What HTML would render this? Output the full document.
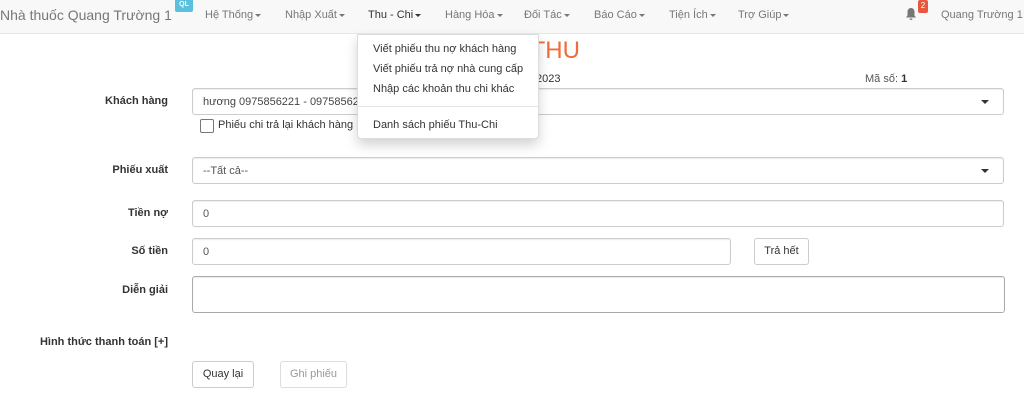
<!DOCTYPE html>
<html><head><meta charset="utf-8"><style>
*{box-sizing:border-box;margin:0;padding:0}
body{width:1024px;height:413px;overflow:hidden;background:#fff;font-family:"Liberation Sans",Arial,sans-serif;font-size:11px;color:#333;position:relative}
.a{position:absolute;white-space:nowrap}
.nav{position:absolute;left:0;top:0;width:1024px;height:34px;background:#f8f8f8;border-bottom:1px solid #e7e7e7}
.m{position:absolute;top:9px;font-size:11px;color:#777;white-space:nowrap}
.c{display:inline-block;width:0;height:0;border-left:3px solid transparent;border-right:3px solid transparent;border-top:3px solid #777;vertical-align:middle;margin-left:2px}
.lbl{position:absolute;font-weight:bold;font-size:11px;color:#333;text-align:right;width:168px;left:0;white-space:nowrap}
.in{position:absolute;border:1px solid #ccc;border-radius:3px;background:#fff;box-shadow:inset 0 1px 1px rgba(0,0,0,.075);padding:7px 10px;font-size:11px;color:#555;white-space:nowrap}
.btn{position:absolute;border:1px solid #ccc;border-radius:3px;background:#fff;font-size:11px;color:#333;text-align:center;line-height:25px}
.arr{position:absolute;right:14px;top:11px;border-left:4px solid transparent;border-right:4px solid transparent;border-top:4px solid #333}
</style></head><body>
<div class="nav">
<div class="a" style="left:0;top:7px;font-size:14px;color:#777">Nhà thuốc Quang Trường 1</div>
<div class="a" style="left:175px;top:0;width:18px;height:12px;background:#5bc0de;color:#fff;font-size:7px;font-weight:bold;text-align:center;line-height:10px;border-radius:0 0 2px 2px">QL</div>
<div class="m" style="left:205px">Hệ Thống<span class="c"></span></div>
<div class="m" style="left:285px">Nhập Xuất<span class="c"></span></div>
<div class="m" style="left:368px;color:#333">Thu - Chi<span class="c" style="border-top-color:#333"></span></div>
<div class="m" style="left:445px">Hàng Hóa<span class="c"></span></div>
<div class="m" style="left:524px">Đối Tác<span class="c"></span></div>
<div class="m" style="left:594px">Báo Cáo<span class="c"></span></div>
<div class="m" style="left:669px">Tiện Ích<span class="c"></span></div>
<div class="m" style="left:738px">Trợ Giúp<span class="c"></span></div>
<svg class="a" style="left:904px;top:7px" width="14" height="14" viewBox="0 0 14 14"><path d="M7 1C4.5 1 3.5 3 3.5 5v3.5L2 10.5h10L10.5 8.5V5C10.5 3 9.5 1 7 1z M5.5 11.5a1.5 1.5 0 0 0 3 0z" fill="#777"/></svg>
<div class="a" style="left:918px;top:0;width:10px;height:13px;background:#e9573f;color:#fff;font-size:8px;text-align:center;line-height:12px;border-radius:2px">2</div>
<div class="m" style="left:941px">Quang Trường 1</div>
</div>
<div class="a" style="left:451px;top:37px;font-size:24px;color:#f26b3a">PHIẾU THU</div>
<div class="a" style="left:536px;top:73px;font-size:11px;color:#333">2023</div>
<div class="a" style="left:865px;top:73px;font-size:11px;color:#555">Mã số: <b style="color:#333">1</b></div>

<div class="lbl" style="top:95px">Khách hàng</div>
<div class="in" style="left:192px;top:88px;width:812px;height:27px;color:#444">hương 0975856221 - 0975856221<span class="arr"></span></div>
<div class="a" style="left:200px;top:119px;width:14px;height:14px;border:1px solid #777;border-radius:2px;background:#fff"></div>
<div class="a" style="left:218px;top:119px;font-size:11px;color:#333">Phiếu chi trả lại khách hàng</div>

<div class="lbl" style="top:164px">Phiếu xuất</div>
<div class="in" style="left:192px;top:157px;width:812px;height:27px">--Tất cả--<span class="arr"></span></div>
<div class="lbl" style="top:207px">Tiền nợ</div>
<div class="in" style="left:192px;top:200px;width:812px;height:27px">0</div>
<div class="lbl" style="top:245px">Số tiền</div>
<div class="in" style="left:192px;top:238px;width:539px;height:27px">0</div>
<div class="btn" style="left:754px;top:238px;width:55px;height:27px">Trả hết</div>
<div class="lbl" style="top:284px">Diễn giải</div>
<div class="in" style="left:192px;top:276px;width:813px;height:37px;border-color:#aaa"></div>
<div class="lbl" style="top:336px">Hình thức thanh toán [+]</div>
<div class="btn" style="left:192px;top:361px;width:62px;height:27px">Quay lại</div>
<div class="btn" style="left:280px;top:361px;width:67px;height:27px;color:#999;border-color:#ddd">Ghi phiếu</div>

<div class="a" style="left:357px;top:34px;width:182px;height:105px;background:#fff;border:1px solid #ddd;border-radius:0 0 4px 4px;box-shadow:0 6px 12px rgba(0,0,0,.175)">
<div class="a" style="left:15px;top:8px;font-size:11px;color:#333">Viết phiếu thu nợ khách hàng</div>
<div class="a" style="left:15px;top:28px;font-size:11px;color:#333">Viết phiếu trả nợ nhà cung cấp</div>
<div class="a" style="left:15px;top:48px;font-size:11px;color:#333">Nhập các khoản thu chi khác</div>
<div class="a" style="left:0;top:71px;width:180px;height:1px;background:#e5e5e5"></div>
<div class="a" style="left:15px;top:84px;font-size:11px;color:#333">Danh sách phiếu Thu-Chi</div>
</div>
</body></html>
